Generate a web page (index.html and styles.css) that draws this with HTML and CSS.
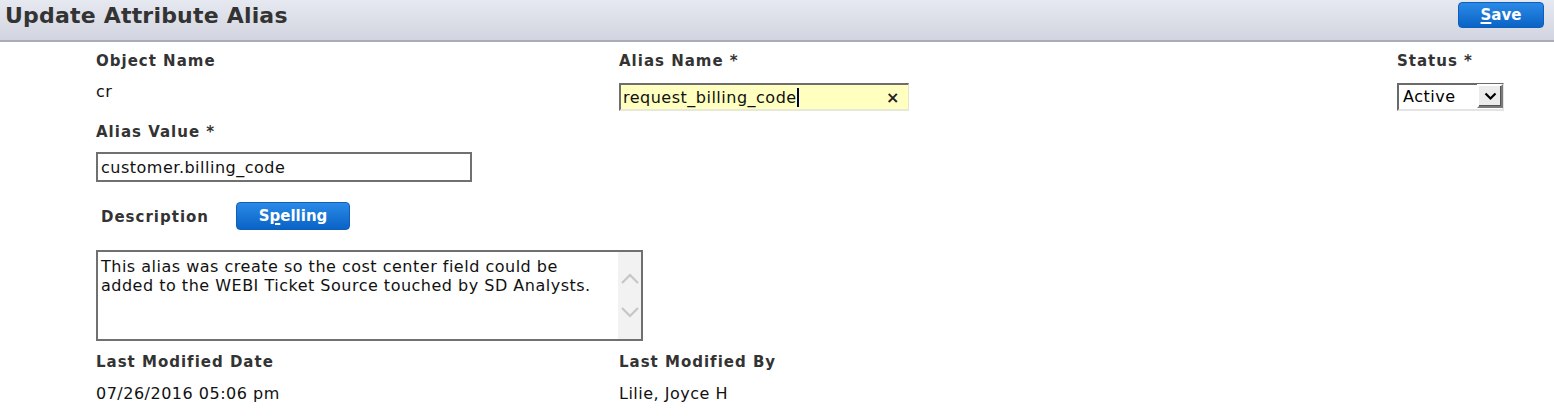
FILE: index.html
```html
<!DOCTYPE html>
<html>
<head>
<meta charset="utf-8">
<link rel="stylesheet" href="styles.css">
</head>
<body>
<div class="header">
  <h1 class="title">Update Attribute Alias</h1>
  <button class="btn btn-save"><u>S</u>ave</button>
</div>
<div class="form">
  <div class="row row1">
    <div class="field">
      <div class="label">Object Name</div>
      <div class="value">cr</div>
    </div>
    <div class="field">
      <div class="label">Alias Name *</div>
      <div class="input input-yellow"><span>request_billing_code</span><span class="caret"></span><span class="clear">×</span></div>
    </div>
    <div class="field">
      <div class="label">Status *</div>
      <div class="select"><span class="sel-text">Active</span><span class="sel-btn"><svg width="13" height="9" viewBox="0 0 13 9"><path d="M1.5 1.5 L6.5 6.5 L11.5 1.5" fill="none" stroke="#000" stroke-width="2.2"/></svg></span></div>
    </div>
  </div>
  <div class="field field-alias">
    <div class="label">Alias Value *</div>
    <div class="input input-value">customer.billing_code</div>
  </div>
  <div class="desc-head">
    <div class="label">Description</div>
    <button class="btn btn-spell">S<u>p</u>elling</button>
  </div>
  <div class="textarea">
    <div class="ta-text">This alias was create so the cost center field could be added to the WEBI Ticket Source touched by SD Analysts.</div>
    <div class="ta-scroll">
      <svg width="20" height="13" viewBox="0 0 20 13"><path d="M2 11 L10 3 L18 11" fill="none" stroke="#c6c6c6" stroke-width="2.2"/></svg>
      <svg width="20" height="13" viewBox="0 0 20 13"><path d="M2 2 L10 10 L18 2" fill="none" stroke="#c6c6c6" stroke-width="2.2"/></svg>
    </div>
  </div>
  <div class="row row-last">
    <div class="field">
      <div class="label">Last Modified Date</div>
      <div class="value">07/26/2016 05:06 pm</div>
    </div>
    <div class="field">
      <div class="label">Last Modified By</div>
      <div class="value">Lilie, Joyce H</div>
    </div>
  </div>
</div>
</body>
</html>
```
FILE: styles.css
```css
html, body {
  margin: 0;
  padding: 0;
  background: #fff;
  font-family: "DejaVu Sans", Verdana, sans-serif;
  color: #222;
}
.header {
  height: 40px;
  background: linear-gradient(#e6e9f0, #d2d5df);
  border-bottom: 2px solid #a9abb6;
  display: flex;
  align-items: flex-start;
  justify-content: space-between;
  padding: 0 10px 0 5px;
}
.title {
  margin: 0;
  padding-top: 2px;
  font-size: 22px;
  line-height: 28px;
  font-weight: bold;
  color: #333;
  letter-spacing: 0.2px;
}
.btn {
  font-family: "DejaVu Sans", Verdana, sans-serif;
  font-weight: bold;
  color: #fff;
  border: 1px solid #0d5fb8;
  border-radius: 4px;
  background: linear-gradient(#2a8ae6, #0a63c6);
  padding: 0;
  cursor: pointer;
}
.btn u { text-decoration-thickness: 2px; text-underline-offset: 2px; }
.btn-save {
  margin-top: 2px;
  width: 86px;
  height: 26px;
  font-size: 15px;
}
.form {
  padding-left: 96px;
}
.row {
  display: grid;
  grid-template-columns: 523px 778px 1fr;
}
.label {
  font-size: 15px;
  font-weight: bold;
  color: #333;
  line-height: 18px;
  letter-spacing: 1px;
  white-space: nowrap;
}
.value {
  font-size: 16px;
  color: #111;
  line-height: 18px;
  letter-spacing: 0.5px;
}
.row1 { padding-top: 10px; }
.row1 .value { margin-top: 13px; }
.input {
  box-sizing: border-box;
  font-size: 16px;
  letter-spacing: 0.5px;
  color: #111;
  display: flex;
  align-items: center;
}
.input-yellow {
  margin-top: 13px;
  width: 290px;
  height: 28px;
  background: #ffffc0;
  border-top: 2px solid #6e6e6e;
  border-left: 2px solid #6e6e6e;
  border-right: 1px solid #e4e4d0;
  border-bottom: 2px solid #e8e8d8;
  padding-left: 2px;
}
.caret {
  display: inline-block;
  width: 2px;
  height: 19px;
  background: #000040;
}
.clear {
  margin-left: auto;
  margin-right: 8px;
  font-size: 16px;
  font-weight: bold;
  color: #222;
}
.select {
  margin-top: 13px;
  box-sizing: border-box;
  width: 107px;
  height: 28px;
  border: 2px solid #6a6a6a;
  border-bottom-color: #e4e4e4;
  border-right-color: #e4e4e4;
  display: flex;
  font-size: 16px;
  letter-spacing: 0.5px;
  color: #000;
}
.sel-text {
  flex: 1;
  padding-left: 4px;
  line-height: 24px;
}
.sel-btn {
  width: 26px;
  border: 2px solid #7a7a7a;
  border-top-color: #fff;
  border-left-color: #fff;
  box-sizing: border-box;
  background: #ececec;
  display: flex;
  align-items: center;
  justify-content: center;
  margin: -1px -1px 0 0;
  height: 24px;
  box-shadow: inset -1px -1px 0 #555;
}
.field-alias { margin-top: 12px; }
.input-value {
  margin-top: 11px;
  width: 376px;
  height: 30px;
  border: 2px solid #707070;
  padding-left: 3px;
}
.desc-head {
  display: flex;
  align-items: center;
  margin-top: 19px;
  padding-left: 5px;
  height: 29px;
}
.desc-head .label { padding-top: 2px; }
.btn-spell {
  margin-left: 27px;
  width: 114px;
  height: 28px;
  font-size: 15px;
}
.textarea {
  margin-top: 20px;
  box-sizing: border-box;
  width: 547px;
  height: 91px;
  border: 2px solid #707070;
  display: flex;
}
.ta-text {
  flex: 1;
  padding: 5px 26px 4px 3px;
  font-size: 16px;
  letter-spacing: 0.5px;
  line-height: 19px;
  color: #111;
}
.ta-scroll {
  width: 23px;
  background: #f2f2f2;
  display: flex;
  flex-direction: column;
  align-items: center;
  justify-content: space-around;
  padding: 10px 0;
}
.row-last { margin-top: 12px; }
.row-last .value { margin-top: 14px; }
```
